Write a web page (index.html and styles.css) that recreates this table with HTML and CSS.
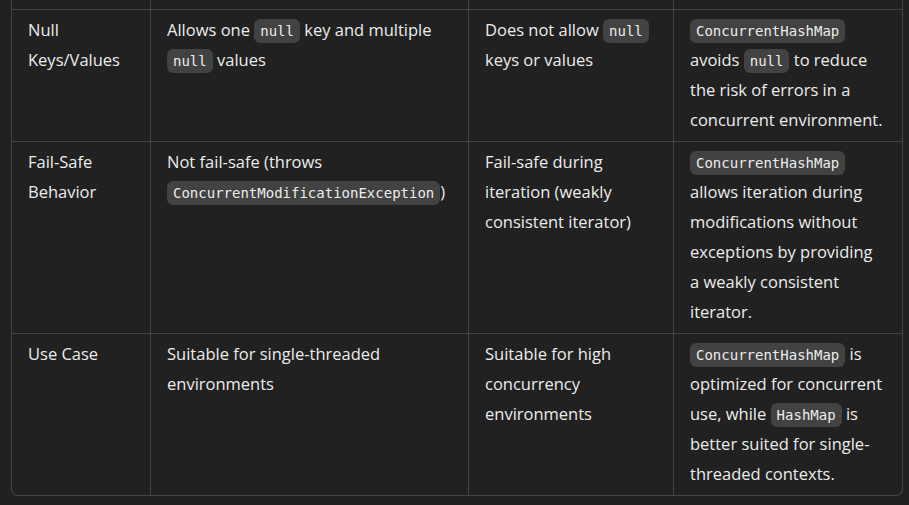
FILE: index.html
```html
<!DOCTYPE html>
<html lang="en">
<head>
<meta charset="utf-8">
<title>HashMap vs ConcurrentHashMap</title>
<link rel="stylesheet" href="styles.css">
</head>
<body>
<div class="table-wrap">
  <table class="cmp">
    <tbody>
      <tr class="cut">
        <td></td><td></td><td></td><td></td>
      </tr>
      <tr>
        <td>Null Keys/Values</td>
        <td>Allows one <code>null</code> key and multiple <code>null</code> values</td>
        <td>Does not allow <code>null</code> keys or values</td>
        <td><code>ConcurrentHashMap</code> avoids <code>null</code> to reduce the risk of errors in a concurrent environment.</td>
      </tr>
      <tr>
        <td>Fail-Safe Behavior</td>
        <td>Not fail-safe (throws <code>ConcurrentModificationException</code>)</td>
        <td>Fail-safe during iteration (weakly consistent iterator)</td>
        <td><code>ConcurrentHashMap</code> allows iteration during modifications without exceptions by providing a weakly consistent iterator.</td>
      </tr>
      <tr>
        <td>Use Case</td>
        <td>Suitable for single-threaded environments</td>
        <td>Suitable for high concurrency environments</td>
        <td><code>ConcurrentHashMap</code> is optimized for concurrent use, while <code>HashMap</code> is better suited for single-threaded contexts.</td>
      </tr>
    </tbody>
  </table>
</div>
</body>
</html>
```
FILE: styles.css
```css
html, body {
  margin: 0;
  padding: 0;
  background: #212121;
}
body {
  padding: 0 9px 0 11px;
  font-family: "Open Sans", "Noto Sans", sans-serif;
  font-size: 16.5px;
  line-height: 30px;
  color: #ececec;
}
.table-wrap {
  width: 890px;
  border: 1px solid #444444;
  border-top: none;
  border-radius: 0 0 7px 7px;
  overflow: hidden;
}
.cmp {
  width: 100%;
  border-collapse: collapse;
  table-layout: fixed;
}
.cmp td {
  vertical-align: top;
  padding: 5px 16px 6px 16px;
  border-left: 1px solid #444444;
  border-top: 1px solid #444444;
  text-align: left;
}
.cmp td:first-child { border-left: none; width: 138px; }
.cmp td:nth-child(2) { width: 317px; }
.cmp td:nth-child(3) { width: 204px; }
.cmp tr.cut td {
  border-top: none;
  height: 9px;
  padding: 0;
}
.cmp code {
  font-family: "DejaVu Sans Mono", monospace;
  font-size: 14px;
  line-height: 1;
  background: #424242;
  border-radius: 6px;
  padding: 4px 6px;
  color: #ececec;
}
```
